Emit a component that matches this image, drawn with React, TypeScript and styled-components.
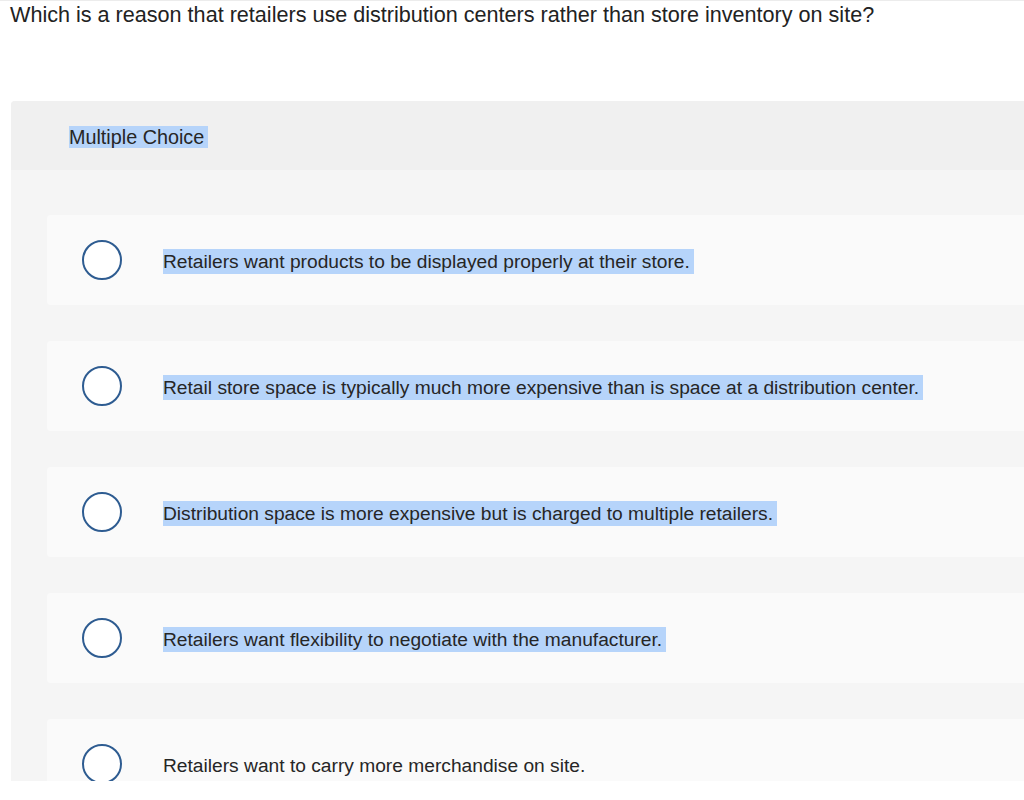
import React from "react";
import styled, { createGlobalStyle } from "styled-components";

const options = [
  { text: "Retailers want products to be displayed properly at their store.", selected: true },
  { text: "Retail store space is typically much more expensive than is space at a distribution center.", selected: true },
  { text: "Distribution space is more expensive but is charged to multiple retailers.", selected: true },
  { text: "Retailers want flexibility to negotiate with the manufacturer.", selected: true },
  { text: "Retailers want to carry more merchandise on site.", selected: false },
];

export default function App() {
  return (
    <>
      <GlobalStyle />
      <Page>
        <Question>
          Which is a reason that retailers use distribution centers rather than store inventory on site?
        </Question>
        <Panel>
          <PanelHeader>
            <Highlight $on>Multiple Choice</Highlight>
          </PanelHeader>
          <OptionList>
            {options.map((opt, i) => (
              <OptionCard key={i}>
                <Radio />
                <OptionText $on={opt.selected}>{opt.text}</OptionText>
              </OptionCard>
            ))}
          </OptionList>
        </Panel>
      </Page>
    </>
  );
}

const GlobalStyle = createGlobalStyle`
  body {
    margin: 0;
    background: #ffffff;
    font-family: "Liberation Sans", Arial, sans-serif;
    color: #262626;
  }
`;

const Page = styled.div`
  height: 780px;
  overflow: hidden;
  border-top: 1px solid #ececec;
`;

const Question = styled.div`
  box-sizing: border-box;
  padding: 1px 10px 0;
  font-size: 21.6px;
  line-height: 26px;
  color: #222;
  height: 100px;
  white-space: nowrap;
`;

const Panel = styled.div`
  margin-left: 11px;
  background: #f5f5f5;
  border-top-left-radius: 4px;
  padding-bottom: 40px;
`;

const PanelHeader = styled.div`
  height: 69px;
  background: #f0f0f0;
  border-top-left-radius: 4px;
  display: flex;
  align-items: center;
  padding-left: 58px;
`;

const Highlight = styled.span<{ $on?: boolean }>`
  display: inline-block;
  font-size: 19.8px;
  line-height: 22px;
  padding-right: 4px;
  margin-top: 2px;
  background: ${(p) => (p.$on ? "#b6d4fa" : "transparent")};
`;

const OptionList = styled.div`
  display: flex;
  flex-direction: column;
  gap: 36px;
  padding: 45px 0 0 36px;
`;

const OptionCard = styled.div`
  height: 90px;
  background: #fafafa;
  border-radius: 4px 0 0 4px;
  display: flex;
  align-items: center;
  padding-left: 35px;
  gap: 41px;
`;

const Radio = styled.span`
  flex: none;
  width: 36px;
  height: 36px;
  border-radius: 50%;
  border: 2px solid #2e5c91;
  background: #fff;
`;

const OptionText = styled.span<{ $on?: boolean }>`
  display: inline-block;
  font-size: 19.2px;
  line-height: 25px;
  padding-right: 4px;
  margin-top: 2px;
  white-space: nowrap;
  background: ${(p) => (p.$on ? "#b6d4fa" : "transparent")};
`;
